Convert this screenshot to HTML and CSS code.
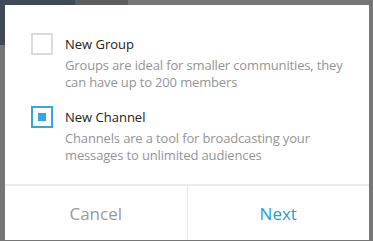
FILE: index.html
```html
<!DOCTYPE html>
<html lang="en">
<head>
	<meta charset="UTF-8">
	<title>New</title>
	<link rel="stylesheet" href="styles.css">
</head>
<body>
	<div class="app">
		<div class="app-top">
			<div class="app-side"></div>
			<div class="app-tab"></div>
		</div>
	</div>

	<div class="dialog">
		<div class="options">
			<div class="option">
				<span class="check"></span>
				<div class="option-text">
					<div class="option-title">New Group</div>
					<div class="option-desc">Groups are ideal for smaller communities, they can have up to 200 members</div>
				</div>
			</div>
			<div class="option">
				<span class="check checked"></span>
				<div class="option-text">
					<div class="option-title">New Channel</div>
					<div class="option-desc">Channels are a tool for broadcasting your messages to unlimited audiences</div>
				</div>
			</div>
		</div>
		<div class="buttons">
			<button type="button" class="btn cancel">Cancel</button>
			<button type="button" class="btn next">Next</button>
		</div>
	</div>
</body>
</html>
```

FILE: styles.css
```css
* {
	margin: 0;
	padding: 0;
	box-sizing: border-box;
}

body {
	width: 373px;
	height: 241px;
	overflow: hidden;
	background: #767676;
	font-family: "Open Sans", "Liberation Sans", sans-serif;
}

.app-top {
	display: flex;
	height: 45px;
}

.app-side {
	width: 75px;
	background: #3f4a55;
}

.app-tab {
	width: 53px;
	background: #5a5e62;
}

.dialog {
	position: absolute;
	left: 5px;
	top: 5px;
	width: 364px;
	height: 235px;
	background: #fff;
	display: flex;
	flex-direction: column;
}

.options {
	padding: 30px 8px 0 26px;
	height: 181px;
	border-bottom: 2px solid #ececec;
}

.option {
	display: flex;
	gap: 12px;
	margin-bottom: 17px;
}

.check {
	flex: none;
	width: 22px;
	height: 22px;
	border: 2px solid #dadada;
	padding: 5px;
	margin-top: -2px;
}

.check.checked {
	border-color: #35a6e1;
}

.check.checked::after {
	content: "";
	display: block;
	width: 8px;
	height: 8px;
	background: #35a6e1;
}

.option-title {
	font-size: 13px;
	line-height: 18px;
	color: #222;
	margin-bottom: 4px;
}

.option-desc {
	font-size: 13px;
	line-height: 17px;
	letter-spacing: -0.15px;
	color: #959595;
}

.buttons {
	flex: 1;
	display: flex;
}

.btn {
	flex: 1;
	border: none;
	background: #fff;
	font-family: "Open Sans", "Liberation Sans", sans-serif;
	font-size: 17px;
	cursor: pointer;
}

.cancel {
	color: #9a9a9a;
	border-right: 1px solid #e6e6e6;
}

.next {
	color: #2a9cd8;
}
```
